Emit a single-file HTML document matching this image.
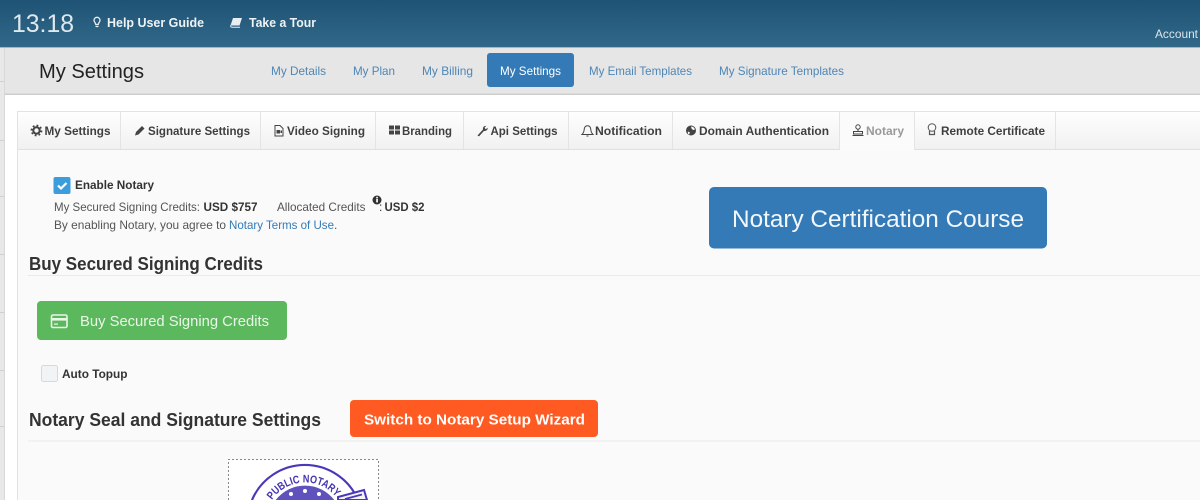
<!DOCTYPE html>
<html><head><meta charset="utf-8"><title>My Settings</title>
<style>
html,body{margin:0;padding:0;width:1200px;height:500px;overflow:hidden;background:#fff}
svg{display:block}
text{font-family:"Liberation Sans",sans-serif;white-space:pre}
.b{font-weight:700}
.tab{font-size:12px;font-weight:700;fill:#3f3f3f}
.sub{font-size:12px;fill:#4f86b5}
.t{font-size:12px;fill:#555}
</style></head><body>
<svg width="1200" height="500" viewBox="0 0 1200 500" xmlns="http://www.w3.org/2000/svg">
<defs>
<linearGradient id="hd" x1="0" y1="0" x2="0" y2="1"><stop offset="0" stop-color="#1f5375"/><stop offset="1" stop-color="#316888"/></linearGradient>
<linearGradient id="tb" x1="0" y1="0" x2="0" y2="1"><stop offset="0" stop-color="#fefefe"/><stop offset="1" stop-color="#f1f1f1"/></linearGradient>
</defs>
<rect width="1200" height="500" fill="#fff"/>
<rect width="1200" height="47" fill="url(#hd)"/>
<rect y="47" width="1200" height="1" fill="#a9b6bf"/>
<rect y="48" width="1200" height="46" fill="#e6e6e6"/>
<rect y="93.500" width="1200" height="1.500" fill="#cdcdcd"/>
<rect y="48" width="4" height="452" fill="#e8e8e8"/>
<rect x="4" y="48" width="1" height="452" fill="#d8d8d8"/>
<rect y="81" width="4" height="1" fill="#d0d0d0"/><rect y="140" width="4" height="1" fill="#d0d0d0"/><rect y="196" width="4" height="1" fill="#d0d0d0"/><rect y="254" width="4" height="1" fill="#d0d0d0"/><rect y="312" width="4" height="1" fill="#d0d0d0"/><rect y="370" width="4" height="1" fill="#d0d0d0"/><rect y="426" width="4" height="1" fill="#d0d0d0"/>

<text x="12" y="32" font-size="25" fill="#dfe8ee" textLength="62" lengthAdjust="spacingAndGlyphs">13:18</text>
<path d="M95.500 26.500h3M95.800 24.500c0-1.600-1.800-2.200-1.800-4.200a3 3 0 0 1 6 0c0 2-1.800 2.600-1.800 4.200z" fill="none" stroke="#e8eef2" stroke-width="1.300"/>
<text x="107" y="27" class="b" font-size="12.500" fill="#eef3f6" textLength="97" lengthAdjust="spacingAndGlyphs">Help User Guide</text>
<path d="M233 18h9l-2.500 7.500h-9z" fill="#e8eef2"/><path d="M230.500 25.500q0 1.800 2 1.800h7.500" fill="none" stroke="#e8eef2" stroke-width="1"/>
<text x="249" y="27" class="b" font-size="12.500" fill="#eef3f6" textLength="67" lengthAdjust="spacingAndGlyphs">Take a Tour</text>
<text x="1155" y="38" font-size="11.500" fill="#dce6ec" textLength="43" lengthAdjust="spacingAndGlyphs">Account</text>

<text x="39" y="78" font-size="20" fill="#222" textLength="105" lengthAdjust="spacingAndGlyphs">My Settings</text>
<text x="271" y="75" class="sub" textLength="55" lengthAdjust="spacingAndGlyphs">My Details</text>
<text x="353" y="75" class="sub" textLength="42" lengthAdjust="spacingAndGlyphs">My Plan</text>
<text x="422" y="75" class="sub" textLength="51" lengthAdjust="spacingAndGlyphs">My Billing</text>
<rect x="487" y="53" width="87" height="34" rx="3" fill="#337ab7"/>
<text x="500" y="75" font-size="12" fill="#fff" textLength="61" lengthAdjust="spacingAndGlyphs">My Settings</text>
<text x="589" y="75" class="sub" textLength="103" lengthAdjust="spacingAndGlyphs">My Email Templates</text>
<text x="719" y="75" class="sub" textLength="125" lengthAdjust="spacingAndGlyphs">My Signature Templates</text>

<rect x="18" y="112" width="1182" height="388" fill="#fafafa"/>
<rect x="17" y="111" width="1183" height="1" fill="#e2e2e2"/>
<rect x="17" y="111" width="1" height="389" fill="#e2e2e2"/>
<rect x="18" y="112" width="1182" height="37" fill="url(#tb)"/>
<rect x="18" y="149" width="1182" height="1" fill="#e0e0e0"/>
<rect x="840" y="112" width="74" height="38" fill="#fbfbfb"/>
<g fill="#e4e4e4"><rect x="120" y="112" width="1" height="37"/><rect x="260" y="112" width="1" height="37"/><rect x="375" y="112" width="1" height="37"/><rect x="463" y="112" width="1" height="37"/><rect x="568" y="112" width="1" height="37"/><rect x="672" y="112" width="1" height="37"/><rect x="839" y="112" width="1" height="38"/><rect x="914" y="112" width="1" height="38"/><rect x="1055" y="112" width="1" height="37"/></g>

<circle cx="36.500" cy="130.500" r="3.200" fill="none" stroke="#444" stroke-width="2"/>
<circle cx="36.500" cy="130.500" r="5" fill="none" stroke="#444" stroke-width="1.800" stroke-dasharray="1.800 2.100"/>
<text x="44.500" y="135" class="tab" textLength="66" lengthAdjust="spacingAndGlyphs">My Settings</text>
<path d="M135 135.500l1-3.500 6-6 2.500 2.500-6 6z" fill="#444"/>
<text x="148" y="135" class="tab" textLength="102" lengthAdjust="spacingAndGlyphs">Signature Settings</text>
<path d="M275 125.500h5l3 3v7.500h-8z" fill="none" stroke="#444"/><rect x="276.500" y="130" width="3.500" height="3.500" fill="#444"/><rect x="280.500" y="130.500" width="1.500" height="2.500" fill="#444"/>
<text x="287" y="135" class="tab" textLength="78" lengthAdjust="spacingAndGlyphs">Video Signing</text>
<g fill="#444"><rect x="389" y="125.500" width="5" height="4"/><rect x="395" y="125.500" width="5" height="4"/><rect x="389" y="130.500" width="5" height="4"/><rect x="395" y="130.500" width="5" height="4"/></g>
<text x="402" y="135" class="tab" textLength="50" lengthAdjust="spacingAndGlyphs">Branding</text>
<path d="M477.500 135.500l5.500-6c-.5-2 .8-3.800 3.200-3.600l-1.700 1.800 1.300 1.500 1.900-1.500c.2 2.200-1.800 3.700-3.700 3.200l-5 5.500z" fill="#444"/>
<text x="490.500" y="135" class="tab" textLength="67" lengthAdjust="spacingAndGlyphs">Api Settings</text>
<path d="M582 134.500h11c-1.500-1.500-2-2.500-2.200-5-.2-2.500-1.500-3.800-3.300-3.800s-3.100 1.300-3.300 3.800c-.2 2.500-.7 3.500-2.200 5zM586.500 136h2" fill="none" stroke="#444"/>
<text x="595" y="135" class="tab" textLength="67" lengthAdjust="spacingAndGlyphs">Notification</text>
<circle cx="691" cy="130.500" r="5" fill="#444"/><path d="M691 126.500c2 0 3.500 1.300 4 3l-2 .5-1.500-1.500zM688 131.500l2 1-1 2c-1-.5-1.500-1.500-1-3z" fill="#fafafa"/>
<text x="699" y="135" class="tab" textLength="130" lengthAdjust="spacingAndGlyphs">Domain Authentication</text>
<circle cx="858" cy="127" r="2.200" fill="none" stroke="#444"/><path d="M858 129v2M853.500 131.500h9v2.500h-9zM852.500 135.500h11" fill="none" stroke="#444"/>
<text x="866" y="135" class="tab" style="fill:#999" textLength="38" lengthAdjust="spacingAndGlyphs">Notary</text>
<circle cx="932" cy="127.500" r="3.800" fill="none" stroke="#555"/><path d="M929.500 131v3.500h5V131" fill="none" stroke="#555" stroke-width="1.200"/>
<text x="941" y="135" class="tab" textLength="104" lengthAdjust="spacingAndGlyphs">Remote Certificate</text>

<rect x="53.500" y="177" width="17" height="17" rx="2" fill="#3c9ddd"/>
<path d="M58 185.500l3 3 5.500-5.500" fill="none" stroke="#fff" stroke-width="2.200"/>
<text x="75" y="189" class="tab" style="fill:#333" font-size="11.500" textLength="79" lengthAdjust="spacingAndGlyphs">Enable Notary</text>
<text x="54" y="211" class="t" textLength="146" lengthAdjust="spacingAndGlyphs">My Secured Signing Credits:</text>
<text x="203.500" y="211" font-size="12" class="b" fill="#333" textLength="54" lengthAdjust="spacingAndGlyphs">USD $757</text>
<text x="277" y="211" class="t" textLength="88.500" lengthAdjust="spacingAndGlyphs">Allocated Credits</text>
<circle cx="377" cy="200" r="4.500" fill="#333"/><rect x="376.200" y="198.800" width="1.700" height="3.600" fill="#fff"/><rect x="376.200" y="196.800" width="1.700" height="1.400" fill="#fff"/>
<text x="379" y="211" font-size="12" fill="#333">:</text>
<text x="384.500" y="211" font-size="12" class="b" fill="#333" textLength="40" lengthAdjust="spacingAndGlyphs">USD $2</text>
<text x="54" y="229" class="t" textLength="172" lengthAdjust="spacingAndGlyphs">By enabling Notary, you agree to</text>
<text x="229" y="229" font-size="12" fill="#337ab7" textLength="105" lengthAdjust="spacingAndGlyphs">Notary Terms of Use</text>
<text x="334" y="229" class="t">.</text>

<rect x="709" y="187" width="338" height="61.500" rx="5" fill="#337ab7"/>
<text x="732" y="227" font-size="24" fill="#f2f7fb" textLength="292" lengthAdjust="spacingAndGlyphs">Notary Certification Course</text>

<text x="29" y="270" class="b" font-size="18" fill="#333" textLength="234" lengthAdjust="spacingAndGlyphs">Buy Secured Signing Credits</text>
<rect x="28" y="275" width="1172" height="1" fill="#eaeaea"/>

<rect x="37" y="301" width="250" height="39" rx="4" fill="#5cb85c"/>
<rect x="51.500" y="315" width="15.500" height="12.500" rx="1.500" fill="none" stroke="#eaf6ea" stroke-width="1.600"/>
<rect x="51.500" y="318" width="15.500" height="2.600" fill="#eaf6ea"/>
<rect x="54" y="323.500" width="4" height="1.200" fill="#eaf6ea"/>
<text x="80" y="326" font-size="15" fill="#eaf6ea" textLength="189" lengthAdjust="spacingAndGlyphs">Buy Secured Signing Credits</text>

<rect x="41.500" y="365.500" width="16" height="16" rx="2" fill="#f1f4f7" stroke="#d8d8d8"/>
<text x="62" y="378" class="tab" style="fill:#333" font-size="11.500" textLength="65.500" lengthAdjust="spacingAndGlyphs">Auto Topup</text>

<text x="29" y="426" class="b" font-size="18" fill="#333" textLength="292" lengthAdjust="spacingAndGlyphs">Notary Seal and Signature Settings</text>
<rect x="28" y="440.500" width="1172" height="1" fill="#e9e9e9"/>
<rect x="350" y="400" width="248" height="37" rx="4" fill="#ff5a22"/>
<text x="364" y="424.500" class="b" font-size="15" fill="#fff" textLength="221" lengthAdjust="spacingAndGlyphs">Switch to Notary Setup Wizard</text>

<path d="M228.500 500V459.500H378.500V500" fill="#fff" stroke="#888" stroke-dasharray="2 2"/>
<path d="M252 500A57.600 57.600 0 0 1 358 500" fill="none" stroke="#4a38b8" stroke-width="2.200"/>
<path d="M275.700 500A37 37 0 0 1 334.300 500z" fill="#4334b0" opacity=".85"/>
<g fill="#fff"><circle cx="291" cy="494" r="2"/><circle cx="305" cy="491" r="2"/><circle cx="319" cy="494" r="2"/></g>
<path id="arc" d="M272 500A40 40 0 0 1 336 497" fill="none"/>
<text font-size="11" class="b" fill="#4334b0"><textPath href="#arc" textLength="74" lengthAdjust="spacingAndGlyphs">PUBLIC NOTARY</textPath></text>
<path d="M338 500v-3l26-7 3 10z" fill="#f4f3fb" stroke="#4a38b8" stroke-width="2"/>
<path d="M345 499l17-4.500" stroke="#4a38b8" stroke-width="1.800" fill="none"/>
</svg>
</body></html>
